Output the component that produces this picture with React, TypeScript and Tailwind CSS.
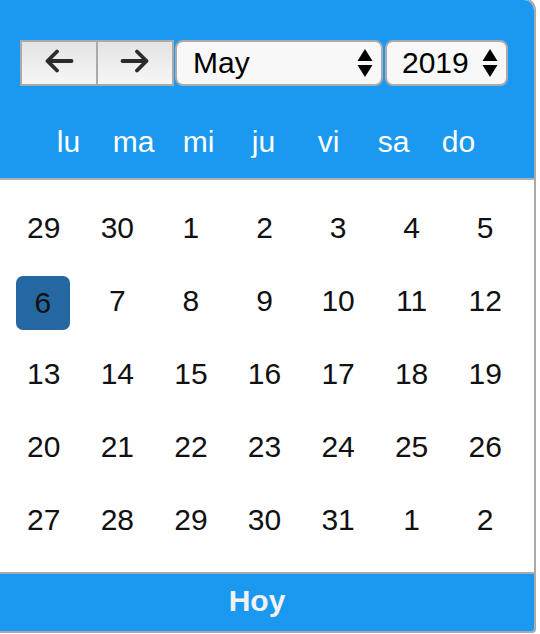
import React from 'react'

const WEEKDAYS = ['lu', 'ma', 'mi', 'ju', 'vi', 'sa', 'do']

const WEEKS = [
  [29, 30, 1, 2, 3, 4, 5],
  [6, 7, 8, 9, 10, 11, 12],
  [13, 14, 15, 16, 17, 18, 19],
  [20, 21, 22, 23, 24, 25, 26],
  [27, 28, 29, 30, 31, 1, 2],
]

function NavArrow({ dir }: { dir: 'left' | 'right' }) {
  return (
    <svg width="30" height="24" viewBox="0 0 30 24" className={dir === 'right' ? 'scale-x-[-1]' : ''}>
      <path
        d="M27.5 12H3.5M13 2.5L3.5 12L13 21.5"
        fill="none"
        stroke="#2b2b2b"
        strokeWidth="3.8"
        strokeLinecap="round"
        strokeLinejoin="round"
      />
    </svg>
  )
}

function UpDown() {
  return (
    <svg width="16" height="30" viewBox="0 0 16 30">
      <path d="M8 1L15.5 13H0.5Z" fill="#000" />
      <path d="M8 29L15.5 17H0.5Z" fill="#000" />
    </svg>
  )
}

function FakeSelect({ value, className }: { value: string; className: string }) {
  return (
    <div
      className={`flex items-center justify-between h-[46px] rounded-[8px] border-2 border-[#aaa] bg-[#f8f8f8] text-black text-[30px] ${className}`}
    >
      <span className="leading-none">{value}</span>
      <UpDown />
    </div>
  )
}

export default function App() {
  return (
    <div className="w-[540px] h-[634px] bg-white overflow-hidden font-['Liberation_Sans',Arial,sans-serif]">
      <div className="-mt-[2px] -ml-[2px] w-[538px] border-2 border-[#aaa] rounded-tr-[12px] rounded-br-[4px] overflow-hidden">
        {/* header */}
        <div className="h-[180px] bg-[#1b99f0] border-b-2 border-[#b0b0b0] pt-[40px] pl-[20px]">
          <div className="flex items-center">
            <button className="flex items-center justify-center w-[78px] h-[46px] border-2 border-[#aaa] bg-gradient-to-b from-[#e4e4e4] to-[#f6f6f6] pb-[5px]">
              <NavArrow dir="left" />
            </button>
            <button className="flex items-center justify-center w-[76px] h-[46px] border-2 border-l-0 border-[#aaa] bg-gradient-to-b from-[#e4e4e4] to-[#f6f6f6] pb-[5px]">
              <NavArrow dir="right" />
            </button>
            <FakeSelect value="May" className="ml-[1px] w-[208px] pl-[16px] pr-[8px]" />
            <FakeSelect value="2019" className="ml-[2px] w-[123px] pl-[15px] pr-[8px]" />
          </div>
          <div className="grid grid-cols-7 w-[455px] ml-[16px] mt-[30px] h-[52px] items-center text-white text-[30px]">
            {WEEKDAYS.map((d) => (
              <span key={d} className="text-center leading-none">
                {d}
              </span>
            ))}
          </div>
        </div>

        {/* days */}
        <div className="h-[394px] bg-white border-b-2 border-[#aaa] pt-[11px] pl-[7px]">
          {WEEKS.map((week, wi) => (
            <div key={wi} className="grid grid-cols-7 w-[515px] h-[73px]">
              {week.map((day, di) => {
                const selected = wi === 1 && di === 0
                return (
                  <div key={di} className="flex items-center justify-center">
                    <span
                      className={`flex items-center justify-center w-[54px] h-[54px] rounded-[7px] text-[30px] leading-none text-[#111] ${
                        selected ? 'bg-[#2567a0] ml-[-2px] mt-[4px]' : ''
                      }`}
                    >
                      {day}
                    </span>
                  </div>
                )
              })}
            </div>
          ))}
        </div>

        {/* footer */}
        <div className="h-[57px] bg-[#1b99f0] flex items-center justify-center pr-[20px] pb-[3px]">
          <span className="text-[30px] font-bold text-[#f2f2f2] leading-none">Hoy</span>
        </div>
      </div>
    </div>
  )
}
